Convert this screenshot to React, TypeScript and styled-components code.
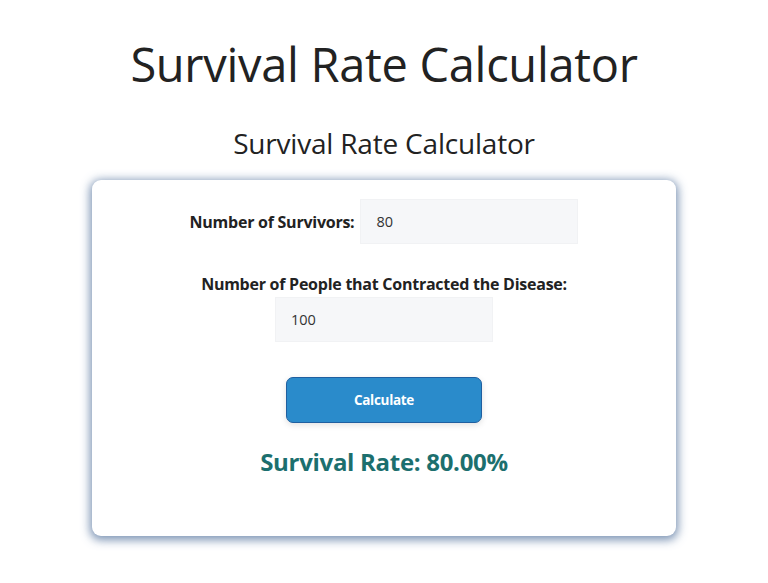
import React, { useState } from "react";
import styled, { createGlobalStyle } from "styled-components";

const Global = createGlobalStyle`
  html, body { margin: 0; padding: 0; background: #ffffff; }
  body { font-family: "Open Sans", "Noto Sans", sans-serif; color: #222; }
`;

const Page = styled.div`
  display: flex;
  flex-direction: column;
  align-items: center;
  padding-top: 34px;
  padding-bottom: 20px;
`;

const Title = styled.h1`
  margin: 0;
  font-size: 47px;
  font-weight: 400;
  line-height: 61px;
  color: #222;
  letter-spacing: -0.3px;
`;

const Subtitle = styled.h2`
  margin: 30px 0 0;
  font-size: 28px;
  font-weight: 400;
  line-height: 36px;
  color: #222;
  letter-spacing: -0.2px;
`;

const Card = styled.div`
  box-sizing: border-box;
  width: 584px;
  height: 356px;
  margin-top: 19px;
  background: #fff;
  border-radius: 9px;
  box-shadow: 0 2px 10px 2px rgba(90, 120, 160, 0.8);
  display: flex;
  flex-direction: column;
  align-items: center;
  padding-top: 19px;
`;

const Row = styled.div`
  display: flex;
  align-items: center;
  justify-content: center;
  gap: 6px;
`;

const Stack = styled.div`
  display: flex;
  flex-direction: column;
  align-items: center;
  margin-top: 29px;
  gap: 2px;
`;

const Label = styled.label`
  font-size: 16px;
  font-weight: 700;
  color: #222;
  letter-spacing: -0.25px;
`;

const Input = styled.input`
  box-sizing: border-box;
  width: 218px;
  height: 45px;
  border: 1px solid #f1f2f4;
  background: #f6f7f9;
  padding: 0 15px;
  font-family: inherit;
  font-size: 14.5px;
  color: #333;
  outline: none;
`;

const Button = styled.button`
  box-sizing: border-box;
  width: 196px;
  height: 46px;
  margin-top: 35px;
  background: #2a8bcb;
  border: 1.5px solid #1f5fa0;
  border-radius: 7px;
  color: #fff;
  font-family: inherit;
  font-size: 13.5px;
  font-weight: 700;
  letter-spacing: -0.3px;
  box-shadow: 0 2px 6px rgba(0, 0, 0, 0.12);
  cursor: pointer;
`;

const Result = styled.div`
  margin-top: 22px;
  font-size: 24px;
  font-weight: 700;
  color: #1c6f6e;
  letter-spacing: -0.3px;
`;

export default function App() {
  const [survivors, setSurvivors] = useState("80");
  const [total, setTotal] = useState("100");
  const [rate, setRate] = useState(80);

  const calc = () => {
    const s = parseFloat(survivors);
    const t = parseFloat(total);
    if (t > 0) setRate((s / t) * 100);
  };

  return (
    <>
      <Global />
      <Page>
        <Title>Survival Rate Calculator</Title>
        <Subtitle>Survival Rate Calculator</Subtitle>
        <Card>
          <Row>
            <Label htmlFor="s">Number of Survivors:</Label>
            <Input id="s" value={survivors} onChange={(e) => setSurvivors(e.target.value)} />
          </Row>
          <Stack>
            <Label htmlFor="t">Number of People that Contracted the Disease:</Label>
            <Input id="t" value={total} onChange={(e) => setTotal(e.target.value)} />
          </Stack>
          <Button onClick={calc}>Calculate</Button>
          <Result>Survival Rate: {rate.toFixed(2)}%</Result>
        </Card>
      </Page>
    </>
  );
}
